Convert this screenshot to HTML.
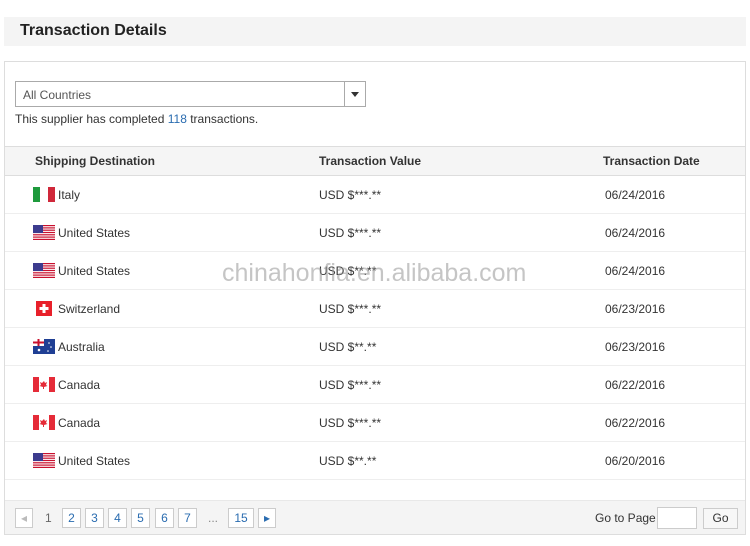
<!DOCTYPE html>
<html><head><meta charset="utf-8"><style>
*{margin:0;padding:0;box-sizing:border-box}
body{width:750px;height:546px;background:#fff;font-family:"Liberation Sans",Arial,sans-serif;font-size:12px;color:#333;position:relative;overflow:hidden}
.a{position:absolute}
.title{left:4px;top:17px;width:742px;height:29px;background:#f4f4f4;font-weight:bold;font-size:16px;padding:5px 0 0 16px;color:#222}
.panel{left:4px;top:61px;width:742px;height:474px;border:1px solid #ddd}
.sel{left:15px;top:81px;width:351px;height:26px;border:1px solid #aaa;color:#555;padding:6px 0 0 7px}
.sel .btn{position:absolute;right:0;top:0;width:21px;height:24px;border-left:1px solid #aaa}
.sel .btn:after{content:"";position:absolute;left:6px;top:10px;border:4px solid transparent;border-top:5px solid #333;border-bottom:0}
.hdr{left:5px;top:146px;width:740px;height:30px;background:#f5f5f5;border-top:1px solid #ddd;border-bottom:1px solid #ddd;font-weight:bold;color:#333}
.row{left:5px;width:740px;height:38px;border-bottom:1px solid #eee}
.row span{position:absolute;top:12px}
.flag{position:absolute;left:28px;top:11px;width:22px;height:15px}
.pg{left:5px;top:500px;width:740px;height:34px;background:#f4f4f4;border-top:1px solid #e8e8e8}
.b{position:absolute;top:7px;height:20px;border:1px solid #ccc;background:#fff;color:#2a6cb0;text-align:center;line-height:18px;font-size:12px}
.wm{left:222px;top:259px;font-size:25px;color:rgba(150,150,150,.55)}
</style></head><body>
<div class="a title">Transaction Details</div>
<div class="a panel"></div>
<div class="a sel">All Countries<div class="btn"></div></div>
<div class="a" style="left:15px;top:112px">This supplier has completed <span style="color:#2a6cb0">118</span> transactions.</div>
<div class="a hdr"><span class="a" style="left:30px;top:7px">Shipping Destination</span><span class="a" style="left:314px;top:7px">Transaction Value</span><span class="a" style="left:598px;top:7px">Transaction Date</span></div>

<div class="a row" style="top:176px"><svg class="flag" viewBox="0 0 22 15"><rect width="7" height="15" fill="#1e9a3c"/><rect x="7" width="8" height="15" fill="#fff"/><rect x="15" width="7" height="15" fill="#d0283a"/></svg><span style="left:53px">Italy</span><span style="left:314px">USD $***.**</span><span style="left:600px">06/24/2016</span></div>
<div class="a row" style="top:214px"><svg class="flag" viewBox="0 0 22 15"><rect width="22" height="15" fill="#fff"/><g fill="#c8102e"><rect y="0" width="22" height="1.2"/><rect y="2.3" width="22" height="1.2"/><rect y="4.6" width="22" height="1.2"/><rect y="6.9" width="22" height="1.2"/><rect y="9.2" width="22" height="1.2"/><rect y="11.5" width="22" height="1.2"/><rect y="13.8" width="22" height="1.2"/></g><rect width="10" height="8" fill="#3c3b8e"/></svg><span style="left:53px">United States</span><span style="left:314px">USD $***.**</span><span style="left:600px">06/24/2016</span></div>
<div class="a row" style="top:252px"><svg class="flag" viewBox="0 0 22 15"><rect width="22" height="15" fill="#fff"/><g fill="#c8102e"><rect y="0" width="22" height="1.2"/><rect y="2.3" width="22" height="1.2"/><rect y="4.6" width="22" height="1.2"/><rect y="6.9" width="22" height="1.2"/><rect y="9.2" width="22" height="1.2"/><rect y="11.5" width="22" height="1.2"/><rect y="13.8" width="22" height="1.2"/></g><rect width="10" height="8" fill="#3c3b8e"/></svg><span style="left:53px">United States</span><span style="left:314px">USD $**.**</span><span style="left:600px">06/24/2016</span></div>
<div class="a row" style="top:290px"><svg class="flag" viewBox="0 0 22 15"><rect x="3" width="16" height="15" fill="#e8202a"/><rect x="9.5" y="3" width="3" height="9" fill="#fff"/><rect x="6.5" y="6" width="9" height="3" fill="#fff"/></svg><span style="left:53px">Switzerland</span><span style="left:314px">USD $***.**</span><span style="left:600px">06/23/2016</span></div>
<div class="a row" style="top:328px"><svg class="flag" viewBox="0 0 22 15"><rect width="22" height="15" fill="#1f3f94"/><rect width="11" height="7" fill="#fff"/><rect x="4.5" width="2" height="7" fill="#c8102e"/><rect y="2.5" width="11" height="2" fill="#c8102e"/><g fill="#fff"><circle cx="6" cy="11" r="1.3"/><circle cx="16" cy="4" r=".8"/><circle cx="18" cy="8" r=".8"/><circle cx="15" cy="12" r=".8"/></g></svg><span style="left:53px">Australia</span><span style="left:314px">USD $**.**</span><span style="left:600px">06/23/2016</span></div>
<div class="a row" style="top:366px"><svg class="flag" viewBox="0 0 22 15"><rect width="22" height="15" fill="#fff"/><rect width="6" height="15" fill="#e52b38"/><rect x="16" width="6" height="15" fill="#e52b38"/><path d="M11 4l1 2 2-1-1 3 1.5 1-3.5 1v2h-1v-2l-3.5-1 1.5-1-1-3 2 1z" fill="#e52b38"/></svg><span style="left:53px">Canada</span><span style="left:314px">USD $***.**</span><span style="left:600px">06/22/2016</span></div>
<div class="a row" style="top:404px"><svg class="flag" viewBox="0 0 22 15"><rect width="22" height="15" fill="#fff"/><rect width="6" height="15" fill="#e52b38"/><rect x="16" width="6" height="15" fill="#e52b38"/><path d="M11 4l1 2 2-1-1 3 1.5 1-3.5 1v2h-1v-2l-3.5-1 1.5-1-1-3 2 1z" fill="#e52b38"/></svg><span style="left:53px">Canada</span><span style="left:314px">USD $***.**</span><span style="left:600px">06/22/2016</span></div>
<div class="a row" style="top:442px"><svg class="flag" viewBox="0 0 22 15"><rect width="22" height="15" fill="#fff"/><g fill="#c8102e"><rect y="0" width="22" height="1.2"/><rect y="2.3" width="22" height="1.2"/><rect y="4.6" width="22" height="1.2"/><rect y="6.9" width="22" height="1.2"/><rect y="9.2" width="22" height="1.2"/><rect y="11.5" width="22" height="1.2"/><rect y="13.8" width="22" height="1.2"/></g><rect width="10" height="8" fill="#3c3b8e"/></svg><span style="left:53px">United States</span><span style="left:314px">USD $**.**</span><span style="left:600px">06/20/2016</span></div>

<div class="a wm">chinahonfia.en.alibaba.com</div>

<div class="a pg">
<div class="b" style="left:10px;width:18px;color:#bbb">&#9666;</div>
<div class="a" style="left:40px;top:10px;color:#666">1</div>
<div class="b" style="left:57px;width:19px">2</div>
<div class="b" style="left:80px;width:19px">3</div>
<div class="b" style="left:103px;width:19px">4</div>
<div class="b" style="left:126px;width:19px">5</div>
<div class="b" style="left:150px;width:19px">6</div>
<div class="b" style="left:173px;width:19px">7</div>
<div class="a" style="left:203px;top:10px;color:#888">...</div>
<div class="b" style="left:223px;width:26px">15</div>
<div class="b" style="left:253px;width:18px">&#9656;</div>
<div class="a" style="left:590px;top:10px;color:#333">Go to Page</div>
<div class="a" style="left:652px;top:6px;width:40px;height:22px;border:1px solid #ccc;background:#fff"></div>
<div class="a" style="left:698px;top:7px;width:35px;height:21px;border:1px solid #ccc;background:#f7f7f7;text-align:center;line-height:19px">Go</div>
</div>
</body></html>
